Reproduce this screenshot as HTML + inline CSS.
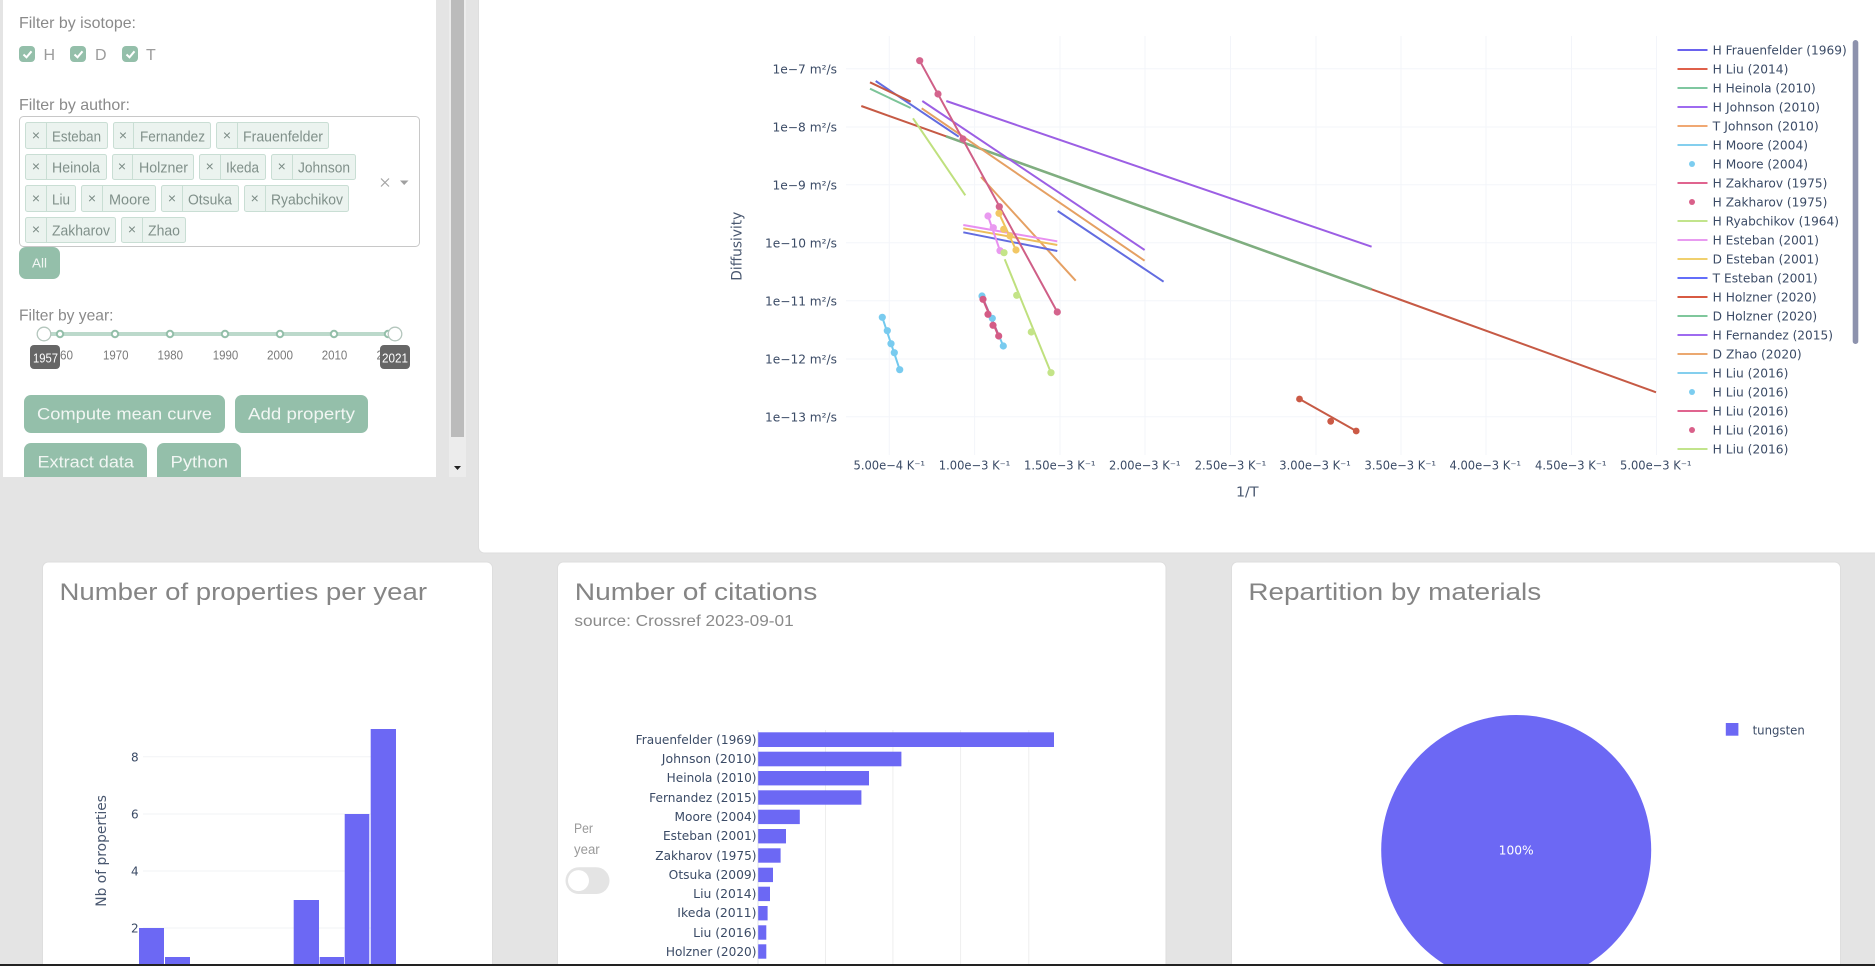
<!DOCTYPE html>
<html lang="en">
<head>
<meta charset="utf-8">
<title>Diffusivity dashboard</title>
<style>
html,body{margin:0;padding:0;width:1875px;height:966px;overflow:hidden;background:#e4e4e4}
svg{display:block}
text{font-family:"Liberation Sans",sans-serif}
.lab{font-size:16px;fill:#8a8a8a}
.chk{font-size:16px;fill:#9c9c9c}
.tag{fill:#ebf3ef;stroke:#c9ded4;stroke-width:1}
.tdiv{stroke:#c9ded4;stroke-width:1}
.tt{font-size:14.5px;fill:#80908a}
.tx{font-size:14px;fill:#7c8c86;text-anchor:middle}
.mk{font-size:13px;fill:#7a7a7a}
.tip{font-size:13px;fill:#fff}
.btn{fill:#94bfaa}
.bt{font-size:17px;fill:#f1f6f3}
.dot{fill:#fff;stroke:#94bfaa;stroke-width:2}
.g{stroke:#f3f5fa;stroke-width:1}
.p{font-family:"DejaVu Sans",sans-serif;font-size:12px;fill:#3b4b66}
.p text,text.p{font-family:"DejaVu Sans",sans-serif}
.title{font-size:24px;fill:#858585}
.l{fill:none;stroke-width:2;stroke-linecap:butt}
.bar{fill:#6c68f4}
</style>
</head>
<body>
<svg width="1875" height="966" viewBox="0 0 1875 966" xmlns="http://www.w3.org/2000/svg">
<rect width="1875" height="966" fill="#e4e4e4"/>

<!-- left panel -->
<rect x="3" y="0" width="433" height="477" fill="#fff"/>
<rect x="449" y="0" width="17" height="477" fill="#ececec"/>
<rect x="451" y="0" width="13" height="437" fill="#bbbbbb"/>
<polygon points="454,466 461,466 457.5,470" fill="#222"/>

<text class="lab" x="19" y="28" textLength="117" lengthAdjust="spacingAndGlyphs">Filter by isotope:</text>
<rect x="19" y="46" width="16" height="16" rx="4" fill="#94bfaa"/>
<path d="M23.5 54.5l3 2.8 5-6" fill="none" stroke="#fff" stroke-width="2"/>
<text class="chk" x="43.5" y="60">H</text>
<rect x="70" y="46" width="16" height="16" rx="4" fill="#94bfaa"/>
<path d="M74.5 54.5l3 2.8 5-6" fill="none" stroke="#fff" stroke-width="2"/>
<text class="chk" x="95" y="60">D</text>
<rect x="122" y="46" width="16" height="16" rx="4" fill="#94bfaa"/>
<path d="M126.5 54.5l3 2.8 5-6" fill="none" stroke="#fff" stroke-width="2"/>
<text class="chk" x="146" y="60">T</text>

<text class="lab" x="19" y="110" textLength="111" lengthAdjust="spacingAndGlyphs">Filter by author:</text>
<rect x="19.5" y="116.5" width="400" height="130" rx="4" fill="#fff" stroke="#c8c8c8"/>

<!-- tags row 1 -->
<rect class="tag" x="25.5" y="122.5" width="82" height="26" rx="2"/><line class="tdiv" x1="46.5" x2="46.5" y1="123" y2="148"/>
<text class="tx" x="36" y="140">×</text><text class="tt" x="52" y="141.5" textLength="49" lengthAdjust="spacingAndGlyphs">Esteban</text>
<rect class="tag" x="113.5" y="122.5" width="97" height="26" rx="2"/><line class="tdiv" x1="133.5" x2="133.5" y1="123" y2="148"/>
<text class="tx" x="123" y="140">×</text><text class="tt" x="140" y="141.5" textLength="65" lengthAdjust="spacingAndGlyphs">Fernandez</text>
<rect class="tag" x="216.5" y="122.5" width="112" height="26" rx="2"/><line class="tdiv" x1="237.5" x2="237.5" y1="123" y2="148"/>
<text class="tx" x="227" y="140">×</text><text class="tt" x="243" y="141.5" textLength="80" lengthAdjust="spacingAndGlyphs">Frauenfelder</text>
<!-- tags row 2 -->
<rect class="tag" x="25.5" y="154.5" width="81" height="25" rx="2"/><line class="tdiv" x1="46.5" x2="46.5" y1="155" y2="179"/>
<text class="tx" x="36" y="171">×</text><text class="tt" x="52" y="172.5" textLength="48" lengthAdjust="spacingAndGlyphs">Heinola</text>
<rect class="tag" x="112.5" y="154.5" width="81" height="25" rx="2"/><line class="tdiv" x1="132.5" x2="132.5" y1="155" y2="179"/>
<text class="tx" x="122" y="171">×</text><text class="tt" x="139" y="172.5" textLength="49" lengthAdjust="spacingAndGlyphs">Holzner</text>
<rect class="tag" x="199.5" y="154.5" width="66" height="25" rx="2"/><line class="tdiv" x1="220.5" x2="220.5" y1="155" y2="179"/>
<text class="tx" x="209.7" y="171">×</text><text class="tt" x="226" y="172.5" textLength="33" lengthAdjust="spacingAndGlyphs">Ikeda</text>
<rect class="tag" x="271.5" y="154.5" width="84" height="25" rx="2"/><line class="tdiv" x1="292.5" x2="292.5" y1="155" y2="179"/>
<text class="tx" x="281.7" y="171">×</text><text class="tt" x="298" y="172.5" textLength="52" lengthAdjust="spacingAndGlyphs">Johnson</text>
<!-- tags row 3 -->
<rect class="tag" x="25.5" y="185.5" width="50" height="26" rx="2"/><line class="tdiv" x1="46.5" x2="46.5" y1="186" y2="211"/>
<text class="tx" x="36" y="203">×</text><text class="tt" x="52" y="204.5" textLength="18" lengthAdjust="spacingAndGlyphs">Liu</text>
<rect class="tag" x="81.5" y="185.5" width="74" height="26" rx="2"/><line class="tdiv" x1="102.5" x2="102.5" y1="186" y2="211"/>
<text class="tx" x="92" y="203">×</text><text class="tt" x="109" y="204.5" textLength="41" lengthAdjust="spacingAndGlyphs">Moore</text>
<rect class="tag" x="161.5" y="185.5" width="77" height="26" rx="2"/><line class="tdiv" x1="182.5" x2="182.5" y1="186" y2="211"/>
<text class="tx" x="172" y="203">×</text><text class="tt" x="188" y="204.5" textLength="44" lengthAdjust="spacingAndGlyphs">Otsuka</text>
<rect class="tag" x="244.5" y="185.5" width="104" height="26" rx="2"/><line class="tdiv" x1="265.5" x2="265.5" y1="186" y2="211"/>
<text class="tx" x="254.7" y="203">×</text><text class="tt" x="271" y="204.5" textLength="72" lengthAdjust="spacingAndGlyphs">Ryabchikov</text>
<!-- tags row 4 -->
<rect class="tag" x="25.5" y="217.5" width="90" height="25" rx="2"/><line class="tdiv" x1="46.5" x2="46.5" y1="218" y2="242"/>
<text class="tx" x="36" y="234">×</text><text class="tt" x="52" y="235.5" textLength="58" lengthAdjust="spacingAndGlyphs">Zakharov</text>
<rect class="tag" x="121.5" y="217.5" width="64" height="25" rx="2"/><line class="tdiv" x1="142.5" x2="142.5" y1="218" y2="242"/>
<text class="tx" x="132" y="234">×</text><text class="tt" x="148" y="235.5" textLength="32" lengthAdjust="spacingAndGlyphs">Zhao</text>

<path d="M381 178.5l8 8M389 178.5l-8 8" stroke="#a5a5a5" stroke-width="1.2" fill="none"/>
<polygon points="400,180.5 408.5,180.5 404.2,185" fill="#a0a0a0"/>

<rect class="btn" x="19" y="247" width="41" height="32" rx="7"/>
<text x="32" y="267.5" font-size="13" fill="#f1f6f3" textLength="15" lengthAdjust="spacingAndGlyphs">All</text>

<text class="lab" x="19" y="320.5" textLength="94.5" lengthAdjust="spacingAndGlyphs">Filter by year:</text>
<rect x="44" y="332" width="351" height="4" fill="#bcd9cb"/>
<circle class="dot" cx="60" cy="334" r="3.2"/><circle class="dot" cx="115" cy="334" r="3.2"/><circle class="dot" cx="170" cy="334" r="3.2"/><circle class="dot" cx="225" cy="334" r="3.2"/><circle class="dot" cx="280" cy="334" r="3.2"/><circle class="dot" cx="334" cy="334" r="3.2"/><circle class="dot" cx="388" cy="334" r="3.2"/>
<circle cx="44" cy="334" r="6.8" fill="#fff" stroke="#b4c6bd" stroke-width="1.3"/>
<circle cx="395" cy="334" r="6.8" fill="#fff" stroke="#b4c6bd" stroke-width="1.3"/>
<text class="mk" x="47" y="359.3" textLength="26" lengthAdjust="spacingAndGlyphs">1960</text>
<text class="mk" x="103" y="359.3" textLength="25.5" lengthAdjust="spacingAndGlyphs">1970</text>
<text class="mk" x="157.5" y="359.3" textLength="25.5" lengthAdjust="spacingAndGlyphs">1980</text>
<text class="mk" x="212.7" y="359.3" textLength="25.5" lengthAdjust="spacingAndGlyphs">1990</text>
<text class="mk" x="267" y="359.3" textLength="26" lengthAdjust="spacingAndGlyphs">2000</text>
<text class="mk" x="321.7" y="359.3" textLength="25.5" lengthAdjust="spacingAndGlyphs">2010</text>
<text class="mk" x="376.5" y="359.3" textLength="25.5" lengthAdjust="spacingAndGlyphs">2020</text>
<rect x="30" y="345" width="30" height="24" rx="4" fill="#666"/>
<text class="tip" x="33" y="362.7" textLength="25" lengthAdjust="spacingAndGlyphs">1957</text>
<rect x="380" y="345" width="30" height="24" rx="4" fill="#666"/>
<text class="tip" x="382" y="362.7" textLength="26" lengthAdjust="spacingAndGlyphs">2021</text>

<rect class="btn" x="24" y="395" width="201" height="38" rx="7"/>
<text class="bt" x="37" y="419.5" textLength="175" lengthAdjust="spacingAndGlyphs">Compute mean curve</text>
<rect class="btn" x="235" y="395" width="133" height="38" rx="7"/>
<text class="bt" x="248" y="419.5" textLength="107" lengthAdjust="spacingAndGlyphs">Add property</text>
<path class="btn" d="M24 477V450a7 7 0 0 1 7-7H140a7 7 0 0 1 7 7V477Z"/>
<text class="bt" x="37.5" y="467.5" textLength="96.5" lengthAdjust="spacingAndGlyphs">Extract data</text>
<path class="btn" d="M157 477V450a7 7 0 0 1 7-7H234a7 7 0 0 1 7 7V477Z"/>
<text class="bt" x="170.5" y="467.5" textLength="57.5" lengthAdjust="spacingAndGlyphs">Python</text>

<!-- main card -->
<rect x="478.5" y="-10" width="1410" height="563" rx="6" fill="#fff" stroke="#dedede"/>

<!-- grid -->
<g class="g">
<line x1="889.3" x2="889.3" y1="36" y2="455"/><line x1="974.6" x2="974.6" y1="36" y2="455"/><line x1="1060" x2="1060" y1="36" y2="455"/><line x1="1145" x2="1145" y1="36" y2="455"/><line x1="1230.5" x2="1230.5" y1="36" y2="455"/><line x1="1316" x2="1316" y1="36" y2="455"/><line x1="1401" x2="1401" y1="36" y2="455"/><line x1="1486" x2="1486" y1="36" y2="455"/><line x1="1571.5" x2="1571.5" y1="36" y2="455"/><line x1="1656.5" x2="1656.5" y1="36" y2="455"/>
<line x1="846" x2="1657" y1="68.7" y2="68.7"/><line x1="846" x2="1657" y1="127" y2="127"/><line x1="846" x2="1657" y1="184.7" y2="184.7"/><line x1="846" x2="1657" y1="242.7" y2="242.7"/><line x1="846" x2="1657" y1="300.7" y2="300.7"/><line x1="846" x2="1657" y1="359" y2="359"/><line x1="846" x2="1657" y1="416.7" y2="416.7"/>
</g>

<!-- y tick labels -->
<g class="p">
<text x="772.5" y="73.5" textLength="64.5" lengthAdjust="spacingAndGlyphs">1e−7 m²/s</text>
<text x="772.5" y="131.5" textLength="64.5" lengthAdjust="spacingAndGlyphs">1e−8 m²/s</text>
<text x="772.5" y="189.5" textLength="64.5" lengthAdjust="spacingAndGlyphs">1e−9 m²/s</text>
<text x="765" y="247.5" textLength="72" lengthAdjust="spacingAndGlyphs">1e−10 m²/s</text>
<text x="765" y="305.5" textLength="72" lengthAdjust="spacingAndGlyphs">1e−11 m²/s</text>
<text x="765" y="363.5" textLength="72" lengthAdjust="spacingAndGlyphs">1e−12 m²/s</text>
<text x="765" y="421.5" textLength="72" lengthAdjust="spacingAndGlyphs">1e−13 m²/s</text>
<!-- x tick labels -->
<text x="853.5" y="469.5" textLength="71.5" lengthAdjust="spacingAndGlyphs">5.00e−4 K⁻¹</text>
<text x="938.8" y="469.5" textLength="71.5" lengthAdjust="spacingAndGlyphs">1.00e−3 K⁻¹</text>
<text x="1024" y="469.5" textLength="71.5" lengthAdjust="spacingAndGlyphs">1.50e−3 K⁻¹</text>
<text x="1109" y="469.5" textLength="71.5" lengthAdjust="spacingAndGlyphs">2.00e−3 K⁻¹</text>
<text x="1194.7" y="469.5" textLength="71.5" lengthAdjust="spacingAndGlyphs">2.50e−3 K⁻¹</text>
<text x="1279.3" y="469.5" textLength="71.5" lengthAdjust="spacingAndGlyphs">3.00e−3 K⁻¹</text>
<text x="1364.5" y="469.5" textLength="71.5" lengthAdjust="spacingAndGlyphs">3.50e−3 K⁻¹</text>
<text x="1449.5" y="469.5" textLength="71.5" lengthAdjust="spacingAndGlyphs">4.00e−3 K⁻¹</text>
<text x="1535" y="469.5" textLength="71.5" lengthAdjust="spacingAndGlyphs">4.50e−3 K⁻¹</text>
<text x="1620" y="469.5" textLength="71.5" lengthAdjust="spacingAndGlyphs">5.00e−3 K⁻¹</text>
</g>
<text x="0" y="0" transform="translate(741.5,280.7) rotate(-90)" font-size="14" fill="#4a5870" style="font-family:'DejaVu Sans',sans-serif" textLength="69" lengthAdjust="spacingAndGlyphs">Diffusivity</text>
<text x="1236" y="496.5" font-size="13.5" fill="#4a5870" style="font-family:'DejaVu Sans',sans-serif" textLength="22.5" lengthAdjust="spacingAndGlyphs">1/T</text>

<!-- traces -->
<g class="l">
<path d="M861.3 106L946 136.3L1371.6 289.3L1656 392.3" stroke="#c65a45"/>
<path d="M946 136.3L1371.6 289.3" stroke="#7fae80" stroke-width="2.6"/>
<path d="M875.7 81L958.7 136.7" stroke="#626ce0"/>
<path d="M870 82.3L910.7 101.7" stroke="#c65a45"/>
<path d="M870 88.7L910.7 108" stroke="#7cc498"/>
<path d="M922.3 101L1144.6 250" stroke="#9c5fe4"/>
<path d="M921.7 108.3L1144.6 260.7" stroke="#e5a063"/>
<path d="M946.3 101L1371.6 246.7" stroke="#9c5fe4"/>
<path d="M913 118.3L965.3 195.3" stroke="#bfe07e"/>
<path d="M981 177L1075.7 280.7" stroke="#e5a063"/>
<path d="M1057.7 211L1163.6 281.7" stroke="#626ce0"/>
<path d="M963.3 225L1057.3 241.3" stroke="#e88ff0"/>
<path d="M963.3 228.3L1057.3 245" stroke="#edbe5c"/>
<path d="M963.3 232.3L1057.3 251" stroke="#626ce0"/>
<path d="M919.7 60.7L1057.3 312" stroke="#cf5f87"/>
<path d="M988 216L1000 250.7" stroke="#e88ff0"/>
<path d="M999 213.3L1016 250" stroke="#f0c25a"/>
<path d="M1004.7 259.3L1051 372.7" stroke="#bfe07e"/>
<path d="M882.3 317.3L899.7 369.7" stroke="#72c9ee"/>
<path d="M982 296L1003.3 346" stroke="#72c9ee"/>
<path d="M983 299.3L998.7 336" stroke="#cf5a85" stroke-width="2.4"/>
<path d="M1299.5 399L1356.2 431" stroke="#c65a45"/>
</g>
<g fill="#d4648d">
<circle cx="919.7" cy="60.7" r="3.6"/><circle cx="938" cy="94" r="3.6"/><circle cx="963" cy="139" r="3.6"/><circle cx="999.3" cy="206.7" r="3.6"/><circle cx="1057.3" cy="312" r="3.6"/>
</g>
<g fill="#e99af0"><circle cx="988" cy="216" r="3.6"/><circle cx="993.3" cy="227.7" r="3.6"/><circle cx="1000" cy="250.7" r="3.6"/></g>
<g fill="#f2c765"><circle cx="999" cy="213.3" r="3.6"/><circle cx="1003.7" cy="229.3" r="3.6"/><circle cx="1010" cy="236" r="3.6"/><circle cx="1016" cy="250" r="3.6"/></g>
<g fill="#c4e488"><circle cx="1004" cy="252.7" r="3.6"/><circle cx="1016.7" cy="295.3" r="3.6"/><circle cx="1031.3" cy="332" r="3.6"/><circle cx="1051" cy="372.7" r="3.6"/></g>
<g fill="#79cbef"><circle cx="882.3" cy="317.3" r="3.6"/><circle cx="887.3" cy="330.7" r="3.6"/><circle cx="891" cy="343.7" r="3.6"/><circle cx="894.3" cy="352.7" r="3.6"/><circle cx="899.7" cy="369.7" r="3.6"/><circle cx="982" cy="296" r="3.6"/><circle cx="992.3" cy="318.3" r="3.6"/><circle cx="1003.3" cy="346" r="3.6"/></g>
<g fill="#d45c86"><circle cx="983" cy="299.3" r="3.6"/><circle cx="988" cy="314.3" r="3.6"/><circle cx="993" cy="325.3" r="3.6"/><circle cx="998.7" cy="336" r="3.6"/></g>
<g fill="#cb5a46"><circle cx="1299.5" cy="399" r="3.4"/><circle cx="1330.7" cy="421.3" r="3.4"/><circle cx="1356.2" cy="431" r="3.4"/></g>

<!-- legend -->
<g stroke-width="2" fill="none">
<line x1="1677.5" x2="1707.5" y1="50" y2="50" stroke="#6a62ee"/>
<line x1="1677.5" x2="1707.5" y1="69" y2="69" stroke="#df604a"/>
<line x1="1677.5" x2="1707.5" y1="88" y2="88" stroke="#7fc7a0"/>
<line x1="1677.5" x2="1707.5" y1="107" y2="107" stroke="#9e6bf0"/>
<line x1="1677.5" x2="1707.5" y1="126" y2="126" stroke="#f0a873"/>
<line x1="1677.5" x2="1707.5" y1="145" y2="145" stroke="#84cfee"/>
<line x1="1677.5" x2="1707.5" y1="183" y2="183" stroke="#e0648f"/>
<line x1="1677.5" x2="1707.5" y1="221" y2="221" stroke="#c2e48c"/>
<line x1="1677.5" x2="1707.5" y1="240" y2="240" stroke="#e89bf0"/>
<line x1="1677.5" x2="1707.5" y1="259" y2="259" stroke="#f0d06e"/>
<line x1="1677.5" x2="1707.5" y1="278" y2="278" stroke="#636efa"/>
<line x1="1677.5" x2="1707.5" y1="297" y2="297" stroke="#d85a42"/>
<line x1="1677.5" x2="1707.5" y1="316" y2="316" stroke="#7fc79c"/>
<line x1="1677.5" x2="1707.5" y1="335" y2="335" stroke="#9e6bf0"/>
<line x1="1677.5" x2="1707.5" y1="354" y2="354" stroke="#eba870"/>
<line x1="1677.5" x2="1707.5" y1="373" y2="373" stroke="#84cfee"/>
<line x1="1677.5" x2="1707.5" y1="411" y2="411" stroke="#e0648f"/>
<line x1="1677.5" x2="1707.5" y1="449" y2="449" stroke="#c2e48c"/>
</g>
<circle cx="1692" cy="164" r="3" fill="#7ccdf0"/><circle cx="1692" cy="202" r="3" fill="#d9608a"/><circle cx="1692" cy="392" r="3" fill="#7ccdf0"/><circle cx="1692" cy="430" r="3" fill="#d9608a"/>
<g class="p">
<text x="1712.7" y="54.5" textLength="134" lengthAdjust="spacingAndGlyphs">H Frauenfelder (1969)</text>
<text x="1712.7" y="73.5" textLength="75.7" lengthAdjust="spacingAndGlyphs">H Liu (2014)</text>
<text x="1712.7" y="92.5" textLength="103" lengthAdjust="spacingAndGlyphs">H Heinola (2010)</text>
<text x="1712.7" y="111.5" textLength="107.3" lengthAdjust="spacingAndGlyphs">H Johnson (2010)</text>
<text x="1712.7" y="130.5" textLength="106" lengthAdjust="spacingAndGlyphs">T Johnson (2010)</text>
<text x="1712.7" y="149.5" textLength="95.3" lengthAdjust="spacingAndGlyphs">H Moore (2004)</text>
<text x="1712.7" y="168.5" textLength="95.3" lengthAdjust="spacingAndGlyphs">H Moore (2004)</text>
<text x="1712.7" y="187.5" textLength="114.7" lengthAdjust="spacingAndGlyphs">H Zakharov (1975)</text>
<text x="1712.7" y="206.5" textLength="114.7" lengthAdjust="spacingAndGlyphs">H Zakharov (1975)</text>
<text x="1712.7" y="225.5" textLength="126.3" lengthAdjust="spacingAndGlyphs">H Ryabchikov (1964)</text>
<text x="1712.7" y="244.5" textLength="106.3" lengthAdjust="spacingAndGlyphs">H Esteban (2001)</text>
<text x="1712.7" y="263.5" textLength="106.3" lengthAdjust="spacingAndGlyphs">D Esteban (2001)</text>
<text x="1712.7" y="282.5" textLength="105" lengthAdjust="spacingAndGlyphs">T Esteban (2001)</text>
<text x="1712.7" y="301.5" textLength="104" lengthAdjust="spacingAndGlyphs">H Holzner (2020)</text>
<text x="1712.7" y="320.5" textLength="104.5" lengthAdjust="spacingAndGlyphs">D Holzner (2020)</text>
<text x="1712.7" y="339.5" textLength="120.3" lengthAdjust="spacingAndGlyphs">H Fernandez (2015)</text>
<text x="1712.7" y="358.5" textLength="89" lengthAdjust="spacingAndGlyphs">D Zhao (2020)</text>
<text x="1712.7" y="377.5" textLength="75.7" lengthAdjust="spacingAndGlyphs">H Liu (2016)</text>
<text x="1712.7" y="396.5" textLength="75.7" lengthAdjust="spacingAndGlyphs">H Liu (2016)</text>
<text x="1712.7" y="415.5" textLength="75.7" lengthAdjust="spacingAndGlyphs">H Liu (2016)</text>
<text x="1712.7" y="434.5" textLength="75.7" lengthAdjust="spacingAndGlyphs">H Liu (2016)</text>
<text x="1712.7" y="453.5" textLength="75.7" lengthAdjust="spacingAndGlyphs">H Liu (2016)</text>
</g>
<rect x="1852.7" y="40" width="5.6" height="304" rx="2.8" fill="#8d92ad"/>

<!-- bottom cards -->
<rect x="42.5" y="562" width="450" height="420" rx="6" fill="#fff" stroke="#dedede"/>
<rect x="557.5" y="562" width="608.5" height="420" rx="6" fill="#fff" stroke="#dedede"/>
<rect x="1231.5" y="562" width="609" height="420" rx="6" fill="#fff" stroke="#dedede"/>

<!-- card 1 -->
<text class="title" x="59.5" y="600" textLength="367.5" lengthAdjust="spacingAndGlyphs">Number of properties per year</text>
<g stroke="#f2f3f6" stroke-width="1">
<line x1="143" x2="396" y1="756.7" y2="756.7"/><line x1="143" x2="396" y1="814" y2="814"/><line x1="143" x2="396" y1="871" y2="871"/><line x1="143" x2="396" y1="928" y2="928"/>
</g>
<g class="p">
<text x="131" y="761.5">8</text><text x="131" y="818.5">6</text><text x="131" y="875.5">4</text><text x="131" y="932.5">2</text>
</g>
<text transform="translate(106,906.7) rotate(-90)" font-size="14" fill="#4a5870" style="font-family:'DejaVu Sans',sans-serif" textLength="111.7" lengthAdjust="spacingAndGlyphs">Nb of properties</text>
<rect class="bar" x="139" y="928" width="25" height="40"/>
<rect class="bar" x="165" y="957" width="25" height="11"/>
<rect class="bar" x="293.7" y="900" width="25.3" height="68"/>
<rect class="bar" x="319.7" y="957" width="24.3" height="11"/>
<rect class="bar" x="344.7" y="814" width="24.6" height="154"/>
<rect class="bar" x="370.7" y="729" width="25.3" height="239"/>

<!-- card 2 -->
<text class="title" x="574.8" y="600" textLength="242.5" lengthAdjust="spacingAndGlyphs">Number of citations</text>
<text x="574.4" y="626" font-size="16" fill="#8a8a8a" textLength="219.3" lengthAdjust="spacingAndGlyphs">source: Crossref 2023-09-01</text>
<g stroke="#eeeeee" stroke-width="1">
<line x1="758" x2="758" y1="730" y2="964" stroke="#dfe3ea"/><line x1="825.5" x2="825.5" y1="730" y2="964"/><line x1="892.9" x2="892.9" y1="730" y2="964"/><line x1="960.6" x2="960.6" y1="730" y2="964"/><line x1="1028.8" x2="1028.8" y1="730" y2="964"/>
</g>
<rect class="bar" x="758.2" y="732.3" width="295.8" height="14.7"/>
<rect class="bar" x="758.2" y="751.7" width="143.2" height="14.6"/>
<rect class="bar" x="758.2" y="771" width="110.8" height="14.4"/>
<rect class="bar" x="758.2" y="790.3" width="103.2" height="14.4"/>
<rect class="bar" x="758.2" y="809.7" width="41.6" height="14.4"/>
<rect class="bar" x="758.2" y="829" width="27.8" height="14.4"/>
<rect class="bar" x="758.2" y="848.3" width="22.4" height="14.4"/>
<rect class="bar" x="758.2" y="867.7" width="14.8" height="14.4"/>
<rect class="bar" x="758.2" y="886.7" width="11.8" height="14.4"/>
<rect class="bar" x="758.2" y="906" width="9.4" height="14.4"/>
<rect class="bar" x="758.2" y="925.3" width="8.1" height="14.4"/>
<rect class="bar" x="758.2" y="944.3" width="8.1" height="14.4"/>
<g class="p">
<text x="635.7" y="744" textLength="120.8" lengthAdjust="spacingAndGlyphs">Frauenfelder (1969)</text>
<text x="661.8" y="763" textLength="94.7" lengthAdjust="spacingAndGlyphs">Johnson (2010)</text>
<text x="666.7" y="782" textLength="89.8" lengthAdjust="spacingAndGlyphs">Heinola (2010)</text>
<text x="649.2" y="802" textLength="107.3" lengthAdjust="spacingAndGlyphs">Fernandez (2015)</text>
<text x="674.5" y="821" textLength="82" lengthAdjust="spacingAndGlyphs">Moore (2004)</text>
<text x="663" y="840" textLength="93.5" lengthAdjust="spacingAndGlyphs">Esteban (2001)</text>
<text x="655.3" y="860" textLength="101.2" lengthAdjust="spacingAndGlyphs">Zakharov (1975)</text>
<text x="668.7" y="879" textLength="87.8" lengthAdjust="spacingAndGlyphs">Otsuka (2009)</text>
<text x="693.2" y="898" textLength="63.3" lengthAdjust="spacingAndGlyphs">Liu (2014)</text>
<text x="677.3" y="917" textLength="79.2" lengthAdjust="spacingAndGlyphs">Ikeda (2011)</text>
<text x="693.2" y="937" textLength="63.3" lengthAdjust="spacingAndGlyphs">Liu (2016)</text>
<text x="665.9" y="956" textLength="90.6" lengthAdjust="spacingAndGlyphs">Holzner (2020)</text>
</g>
<text x="574" y="833" font-size="14" fill="#9a9a9a" textLength="19" lengthAdjust="spacingAndGlyphs">Per</text>
<text x="574" y="854" font-size="14" fill="#9a9a9a" textLength="25.7" lengthAdjust="spacingAndGlyphs">year</text>
<rect x="565.5" y="867.3" width="44" height="26.7" rx="13.3" fill="#e4e4e4"/>
<circle cx="578.5" cy="880.6" r="10.5" fill="#fff"/>

<!-- card 3 -->
<text class="title" x="1248.4" y="600" textLength="292.8" lengthAdjust="spacingAndGlyphs">Repartition by materials</text>
<circle cx="1516.2" cy="850" r="135" fill="#6c68f4"/>
<text x="1498.7" y="854.5" font-size="12" fill="#fff" style="font-family:'DejaVu Sans',sans-serif" textLength="35" lengthAdjust="spacingAndGlyphs">100%</text>
<rect x="1725.8" y="723" width="12.6" height="12.7" fill="#6c68f4"/>
<text class="p" x="1752.6" y="734.5" textLength="52.2" lengthAdjust="spacingAndGlyphs">tungsten</text>

<!-- bottom strip -->
<rect x="0" y="964" width="1875" height="2" fill="#222"/>
</svg>
</body>
</html>
